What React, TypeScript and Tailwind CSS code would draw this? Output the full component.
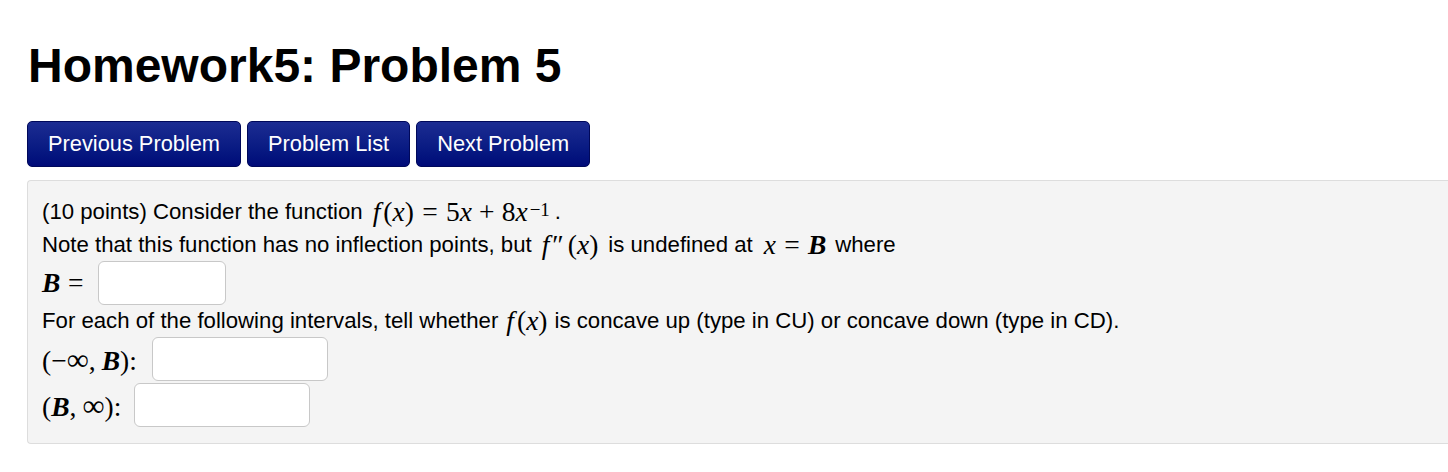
import React from "react";

const sans = { fontFamily: '"Liberation Sans", Arial, Helvetica, sans-serif' };

function M({ children }: { children: React.ReactNode }) {
  return (
    <span className="text-[27.5px] leading-none whitespace-nowrap" style={{ fontFamily: '"Liberation Serif", "Times New Roman", serif' }}>
      {children}
    </span>
  );
}

function I({ children }: { children: React.ReactNode }) {
  return <i className="italic">{children}</i>;
}

function F() {
  return <i className="italic mr-[3px]">f</i>;
}

function BB() {
  return <b className="italic font-bold">B</b>;
}

function Inf() {
  return <span className="text-[31px] leading-none">∞</span>;
}

function Eq() {
  return <span className="mx-[0.3em]">=</span>;
}

function Plus() {
  return <span className="mx-[0.26em]">+</span>;
}

function Btn({ children }: { children: React.ReactNode }) {
  return (
    <button className="h-[46px] px-[20px] rounded-[5px] border border-[#00085a] bg-gradient-to-b from-[#1c2c92] to-[#000a78] text-white text-[21.8px] leading-none">
      {children}
    </button>
  );
}

function Field({ w }: { w: string }) {
  return <div className={`h-[44px] ${w} bg-white border border-[#c8c8c8] rounded-[6px]`} />;
}

export default function App() {
  return (
    <div className="w-[1448px] h-[472px] bg-white overflow-hidden text-black" style={sans}>
      <div className="pl-[27px] pt-[40px]">
        <h1 className="text-[48px] font-bold leading-[52px] ml-[1px]">Homework5: Problem 5</h1>
        <div className="flex gap-[6px] mt-[29px]">
          <Btn>Previous Problem</Btn>
          <Btn>Problem List</Btn>
          <Btn>Next Problem</Btn>
        </div>
        <div className="mt-[13px] bg-[#f4f4f4] border border-[#dddddd] border-r-0 rounded-l-[4px] pl-[14px] pt-[14px] pb-[16px] text-[22.2px]">
          <div className="h-[33px] flex items-center">
            <span>(10 points) Consider the function</span>
            <span className="w-[10px]" />
            <M>
              <F />(<I>x</I>)<Eq />5<I>x</I>
              <Plus />8<I>x</I>
              <sup className="text-[19px] relative top-[-5px] ml-[2px]">−1</sup>
            </M>
            <span className="ml-[5px]">.</span>
          </div>
          <div className="h-[33px] flex items-center">
            <span>Note that this function has no inflection points, but</span>
            <span className="w-[10px]" />
            <M>
              <F />
              <span className="mr-[4px]">″</span>(<I>x</I>)
            </M>
            <span className="w-[10px]" />
            <span>is undefined at</span>
            <span className="w-[11px]" />
            <M>
              <I>x</I>
              <Eq />
              <BB />
            </M>
            <span className="w-[9px]" />
            <span>where</span>
          </div>
          <div className="h-[44px] flex items-center">
            <M>
              <BB />
              <span className="ml-[0.28em]">=</span>
            </M>
            <div className="ml-[14px]">
              <Field w="w-[128px]" />
            </div>
          </div>
          <div className="h-[32px] flex items-center">
            <span>For each of the following intervals, tell whether</span>
            <span className="w-[8px]" />
            <M>
              <F />(<I>x</I>)
            </M>
            <span className="w-[7px]" />
            <span>is concave up (type in CU) or concave down (type in CD).</span>
          </div>
          <div className="h-[44px] flex items-center">
            <M>
              (−<Inf />,<span className="ml-[6px]" />
              <BB />):
            </M>
            <div className="ml-[15px]">
              <Field w="w-[176px]" />
            </div>
          </div>
          <div className="h-[44px] flex items-center mt-[2px]">
            <M>
              (<BB />,<span className="ml-[6px]" />
              <Inf />):
            </M>
            <div className="ml-[13px]">
              <Field w="w-[176px]" />
            </div>
          </div>
        </div>
      </div>
    </div>
  );
}
